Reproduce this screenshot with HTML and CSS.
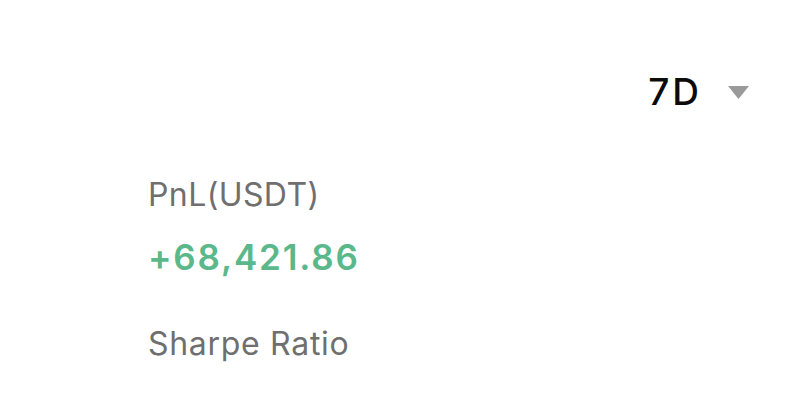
FILE: index.html
```html
<!DOCTYPE html>
<html>
<head>
<meta charset="utf-8">
<link rel="stylesheet" href="styles.css">
</head>
<body>
<div class="page">
  <div class="top">
    <div class="period">
      <span class="period-label">7D</span>
      <svg class="caret" width="21" height="13" viewBox="0 0 21 13"><polygon points="0,0 21,0 10.5,13" fill="#9a9a9a"/></svg>
    </div>
  </div>
  <div class="stats">
    <div class="label">PnL(USDT)</div>
    <div class="value">+68,421.86</div>
    <div class="label label-sharpe">Sharpe Ratio</div>
  </div>
</div>
</body>
</html>
```
FILE: styles.css
```css
html, body {
  margin: 0;
  padding: 0;
  background: #ffffff;
}
body {
  font-family: Inter, "Noto Sans", sans-serif;
}
.page {
  width: 807px;
  height: 404px;
  overflow: hidden;
}
.top {
  display: flex;
  justify-content: flex-end;
  padding: 68px 58px 0 0;
}
.period {
  display: flex;
  align-items: center;
  gap: 26px;
}
.period-label {
  font-size: 37px;
  line-height: 48px;
  color: #0b0b0b;
  font-weight: 500;
  letter-spacing: 3px;
}
.caret {
  display: block;
}
.stats {
  padding: 59px 0 0 148px;
  display: flex;
  flex-direction: column;
}
.label {
  font-size: 32px;
  line-height: 40px;
  color: #6f6f6f;
  letter-spacing: 0.4px;
}
.value {
  margin-top: 18px;
  font-size: 35px;
  line-height: 48px;
  color: #5bb88a;
  font-weight: 600;
  letter-spacing: 1.8px;
}
.label-sharpe {
  margin-top: 43px;
  letter-spacing: 0.7px;
}
```
